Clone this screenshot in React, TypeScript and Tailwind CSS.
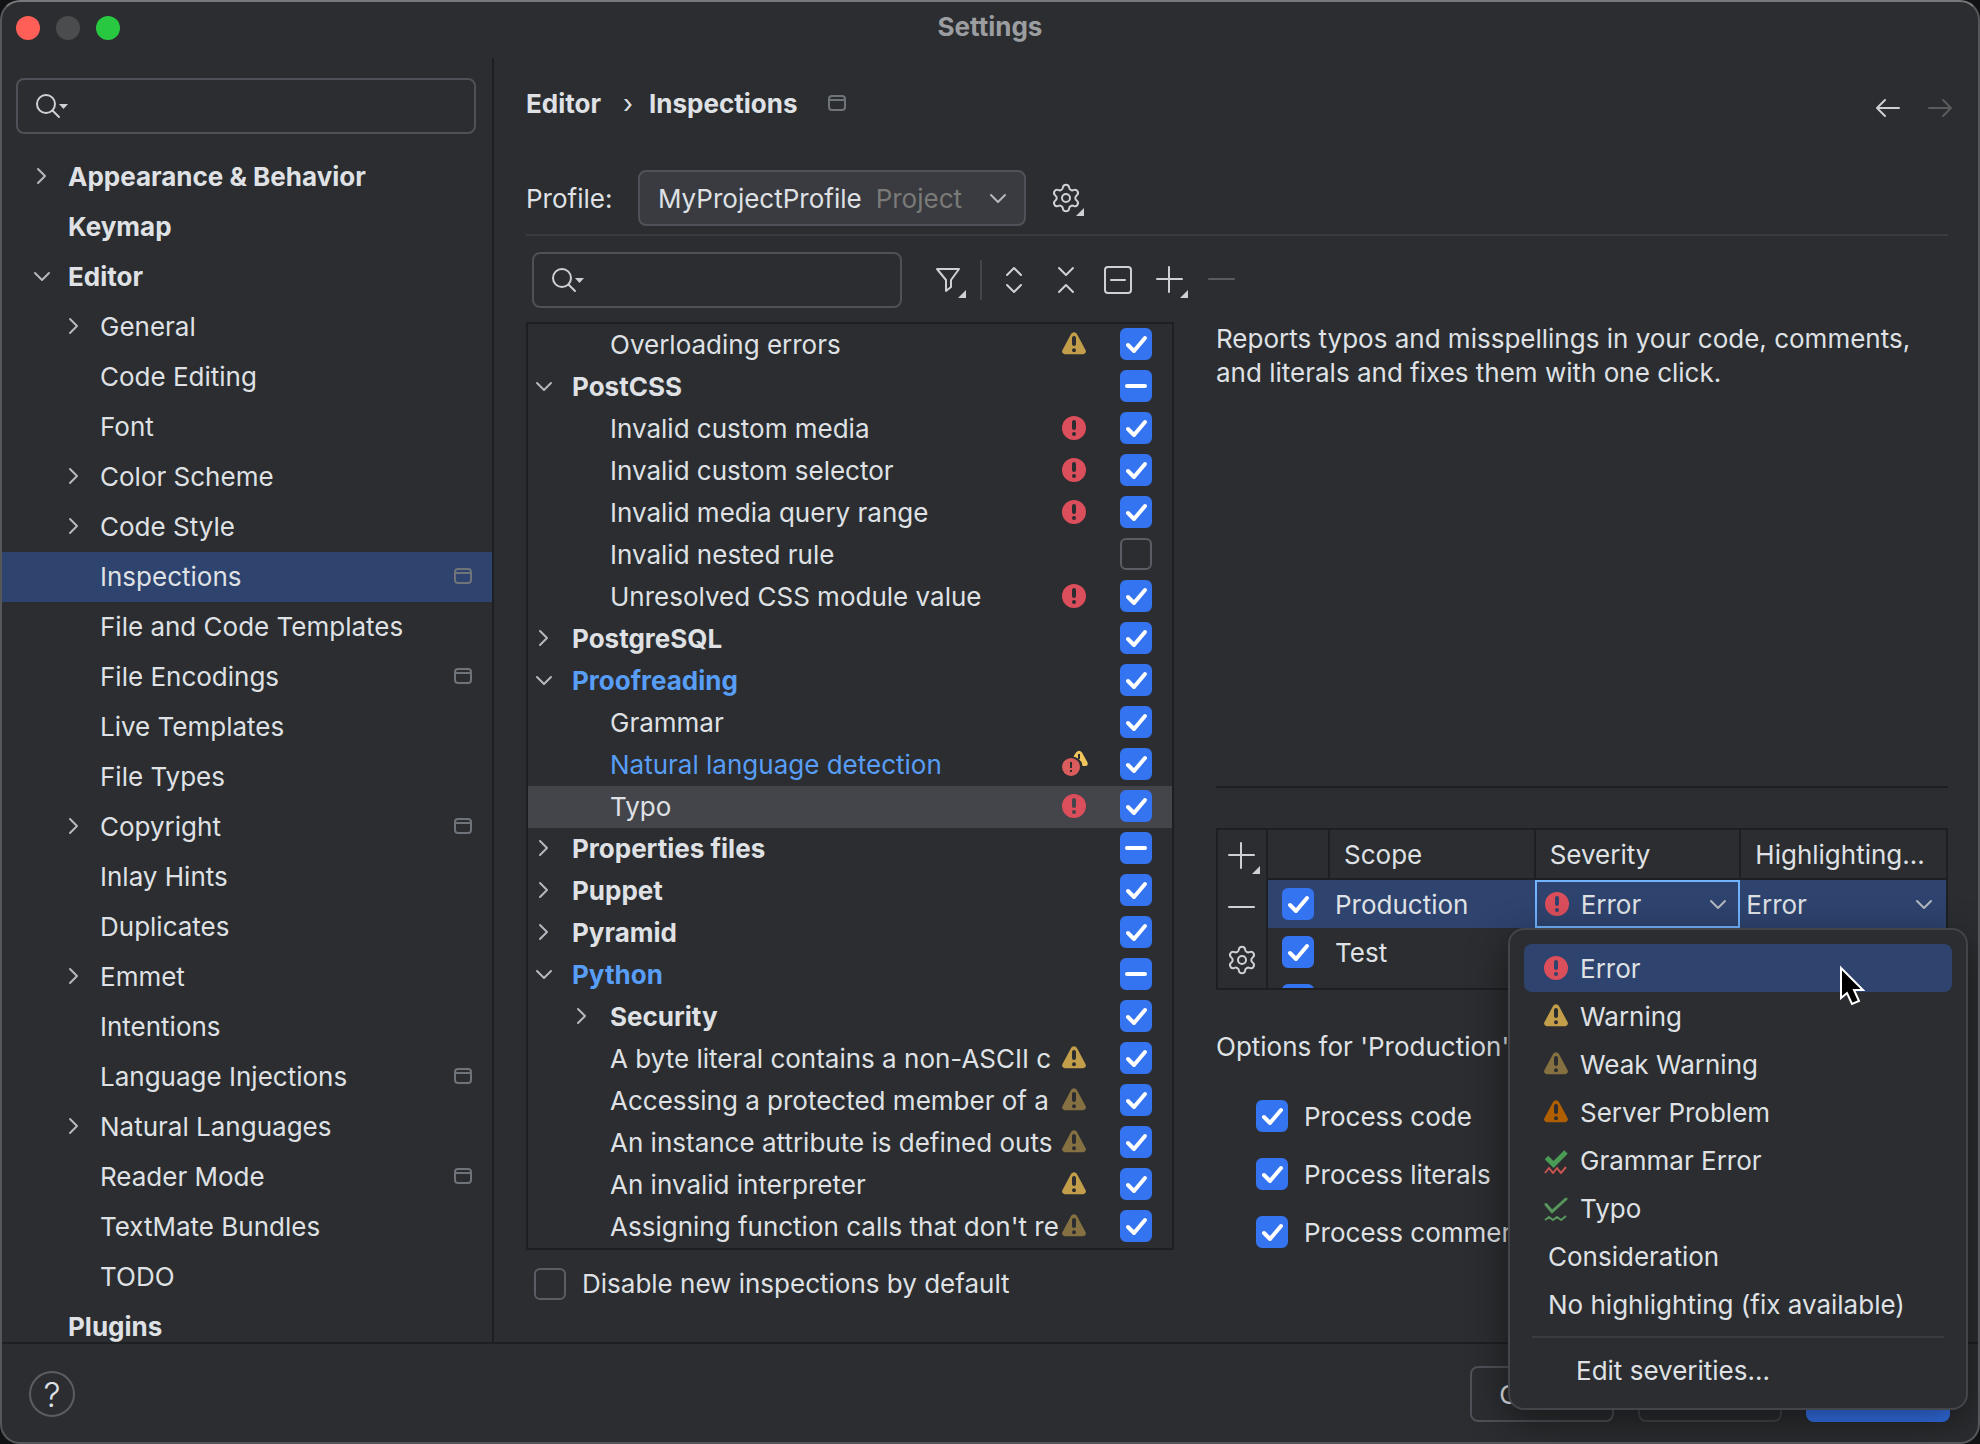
import { useState } from "react";
import type { ReactNode } from "react";
import { Settings } from "lucide-react";

type NavItem = { name: string; top?: boolean; arrow?: "right" | "down"; project?: boolean };

const navItems: NavItem[] = [
  { name: "Appearance & Behavior", top: true, arrow: "right" },
  { name: "Keymap", top: true },
  { name: "Editor", top: true, arrow: "down" },
  { name: "General", arrow: "right" },
  { name: "Code Editing" },
  { name: "Font" },
  { name: "Color Scheme", arrow: "right" },
  { name: "Code Style", arrow: "right" },
  { name: "Inspections", project: true },
  { name: "File and Code Templates" },
  { name: "File Encodings", project: true },
  { name: "Live Templates" },
  { name: "File Types" },
  { name: "Copyright", arrow: "right", project: true },
  { name: "Inlay Hints" },
  { name: "Duplicates" },
  { name: "Emmet", arrow: "right" },
  { name: "Intentions" },
  { name: "Language Injections", project: true },
  { name: "Natural Languages", arrow: "right" },
  { name: "Reader Mode", project: true },
  { name: "TextMate Bundles" },
  { name: "TODO" },
  { name: "Plugins", top: true },
];

type Level = "error" | "warning" | "weak" | "server" | "mixed" | "grammar" | "typo";
type State = "on" | "off" | "mixed";
type Inspection = {
  name: string;
  group?: boolean;
  nested?: boolean;
  arrow?: "right" | "down";
  changed?: boolean;
  level?: Level;
  state: State;
};

const inspections: Inspection[] = [
  { name: "Overloading errors", level: "warning", state: "on" },
  { name: "PostCSS", group: true, arrow: "down", state: "mixed" },
  { name: "Invalid custom media", level: "error", state: "on" },
  { name: "Invalid custom selector", level: "error", state: "on" },
  { name: "Invalid media query range", level: "error", state: "on" },
  { name: "Invalid nested rule", state: "off" },
  { name: "Unresolved CSS module value", level: "error", state: "on" },
  { name: "PostgreSQL", group: true, arrow: "right", state: "on" },
  { name: "Proofreading", group: true, arrow: "down", changed: true, state: "on" },
  { name: "Grammar", state: "on" },
  { name: "Natural language detection", changed: true, level: "mixed", state: "on" },
  { name: "Typo", level: "error", state: "on" },
  { name: "Properties files", group: true, arrow: "right", state: "mixed" },
  { name: "Puppet", group: true, arrow: "right", state: "on" },
  { name: "Pyramid", group: true, arrow: "right", state: "on" },
  { name: "Python", group: true, arrow: "down", changed: true, state: "mixed" },
  { name: "Security", group: true, nested: true, arrow: "right", state: "on" },
  { name: "A byte literal contains a non-ASCII c", level: "warning", state: "on" },
  { name: "Accessing a protected member of a", level: "weak", state: "on" },
  { name: "An instance attribute is defined outs", level: "weak", state: "on" },
  { name: "An invalid interpreter", level: "warning", state: "on" },
  { name: "Assigning function calls that don't re", level: "weak", state: "on" },
];

const severities: { name: string; level?: Level }[] = [
  { name: "Error", level: "error" },
  { name: "Warning", level: "warning" },
  { name: "Weak Warning", level: "weak" },
  { name: "Server Problem", level: "server" },
  { name: "Grammar Error", level: "grammar" },
  { name: "Typo", level: "typo" },
  { name: "Consideration" },
  { name: "No highlighting (fix available)" },
];

function Chevron({ dir }: { dir: "right" | "down" }) {
  return (
    <svg width="20" height="20" viewBox="0 0 20 20" fill="none" stroke="#b4b8bf" strokeWidth="2" strokeLinecap="round" strokeLinejoin="round">
      <path d={dir === "right" ? "M6 3l7 7-7 7" : "M3 7l7 7 7-7"} />
    </svg>
  );
}

function ProjectIcon() {
  return (
    <svg width="18" height="16" viewBox="0 0 18 16" fill="none" stroke="#6f737a" strokeWidth="2">
      <rect x="1" y="1" width="16" height="14" rx="3" />
      <path d="M1 5h16" />
    </svg>
  );
}

function SearchIcon() {
  return (
    <svg width="34" height="26" viewBox="0 0 34 26" fill="none">
      <circle cx="12" cy="11" r="9" stroke="#ced0d6" strokeWidth="2" />
      <path d="M18.500 17.500L25 24" stroke="#ced0d6" strokeWidth="2" strokeLinecap="round" />
      <path d="M25 11h9l-4.500 5z" fill="#ced0d6" />
    </svg>
  );
}

function SearchBox({ label }: { label: string }) {
  return (
    <div className="flex h-14 items-center rounded-lg border-2 border-[#4e5157] pl-4">
      <SearchIcon />
      <input type="text" aria-label={label} className="min-w-0 flex-1 bg-transparent px-2 outline-none" />
    </div>
  );
}

const exclamation = "M12 4a2 2 0 0 1 2 2v6a2 2 0 0 1-4 0V6a2 2 0 0 1 2-2zM12 16a2 2 0 1 1 0 4 2 2 0 0 1 0-4z";

function Triangle({ color }: { color: string }) {
  return (
    <svg width="24" height="24" viewBox="0 0 24 24">
      <path
        fill={color}
        fillRule="evenodd"
        d="M9.200 1.800a3.200 3.200 0 0 1 5.600 0l8.700 16.200a2.800 2.800 0 0 1-2.500 4.200H3a2.800 2.800 0 0 1-2.500-4.200zM12 4a2 2 0 0 1 2 2v6a2 2 0 0 1-4 0V6a2 2 0 0 1 2-2zM12 16.200a2 2 0 1 1 0 4 2 2 0 0 1 0-4z"
      />
    </svg>
  );
}

function LevelIcon({ level }: { level: Level }) {
  if (level === "warning") return <Triangle color="#c29e4a" />;
  if (level === "weak") return <Triangle color="#857042" />;
  if (level === "server") return <Triangle color="#b05f00" />;
  if (level === "error") {
    return (
      <svg width="24" height="24" viewBox="0 0 24 24">
        <path fill="#db4e5b" fillRule="evenodd" d={"M12 0a12 12 0 1 1 0 24 12 12 0 0 1 0-24z" + exclamation} />
      </svg>
    );
  }
  if (level === "mixed") {
    return (
      <svg width="28" height="28" viewBox="0 0 28 28" className="shrink-0">
        <path d="M11.500 6.500l2.500-4Q17 -1 20 2.500l5.500 10Q26.500 16 23.500 16H20.500Q20 9 11.500 6.500z" fill="#f2c55c" />
        <path d="M17 4v5" stroke="#2b2d30" strokeWidth="2" />
        <circle cx="9" cy="17" r="9" fill="#db5c5c" />
        <path d="M9 12v6M9 20v2" stroke="#2b2d30" strokeWidth="2" />
      </svg>
    );
  }
  if (level === "grammar") {
    return (
      <svg width="24" height="28" viewBox="0 0 24 28" fill="none">
        <path d="M2.500 11.500l7 7L22 6" stroke="#499c54" strokeWidth="5" />
        <path d="M1 27l4-5 4 5 4-5 4 5 5-6" stroke="#c75450" strokeWidth="2" />
      </svg>
    );
  }
  return (
    <svg width="24" height="28" viewBox="0 0 24 28" fill="none">
      <path d="M2 10.500l6 7L22 5" stroke="#57965c" strokeWidth="3" strokeLinecap="round" />
      <path d="M1 26l4-3 4 3 4-3 4 3 5-4" stroke="#57965c" strokeWidth="2" />
    </svg>
  );
}

function Checkbox({ id, state, label }: { id: string; state: State; label?: string }) {
  return (
    <span className="relative block size-8 shrink-0">
      <input
        id={id}
        type="checkbox"
        aria-label={label}
        defaultChecked={state !== "off"}
        className="peer block size-8 appearance-none rounded-md border-2 border-[#5a5d63] checked:border-[#3574f0] checked:bg-[#3574f0]"
      />
      <svg
        viewBox="0 0 32 32"
        fill="none"
        stroke="white"
        strokeWidth="4"
        strokeLinecap="round"
        strokeLinejoin="round"
        className="pointer-events-none absolute inset-0 hidden peer-checked:block"
      >
        <path d={state === "mixed" ? "M7 16h18" : "M8 17l6 6L25 10"} />
      </svg>
    </span>
  );
}

// small triangle in the corner of a button that opens a popup
function Corner() {
  return (
    <svg width="8" height="8" viewBox="0 0 8 8" className="absolute right-2 bottom-0.5">
      <path d="M8 0v8H0z" fill="#ced0d6" />
    </svg>
  );
}

function ToolButton({ label, corner, children }: { label: string; corner?: boolean; children: ReactNode }) {
  return (
    <button type="button" aria-label={label} className="relative flex h-10 w-[52px] shrink-0 items-center justify-center">
      {children}
      {corner && <Corner />}
    </button>
  );
}

function Glyph({ d, color = "#ced0d6" }: { d: string; color?: string }) {
  return (
    <svg width="32" height="32" viewBox="0 0 32 32" fill="none" stroke={color} strokeWidth="2" strokeLinecap="round" strokeLinejoin="round">
      <path d={d} />
    </svg>
  );
}

function Sidebar() {
  return (
    <aside className="flex w-[492px] shrink-0 flex-col border-r-2 border-[#1e1f22]">
      <div className="pt-5 pr-4 pl-3.5">
        <SearchBox label="Search settings" />
      </div>
      <nav className="mt-[18px] min-h-0 flex-1 overflow-hidden">
        {navItems.map((item) => (
          <a
            key={item.name}
            href="#"
            className={`flex h-[50px] items-center pr-5 pb-0.5 ${item.top ? "pl-[30px] font-bold" : "pl-[62px]"} ${
              item.name === "Inspections" ? "bg-[#2e436e]" : ""
            }`}
          >
            <span className="w-9 shrink-0">{item.arrow && <Chevron dir={item.arrow} />}</span>
            <span className="flex-1 whitespace-nowrap">{item.name}</span>
            {item.project && <ProjectIcon />}
          </a>
        ))}
      </nav>
    </aside>
  );
}

function Header() {
  return (
    <>
      <div className="flex h-[90px] items-center font-bold">
        <span>Editor</span>
        <span className="w-12 pl-1.5 text-center font-normal">›</span>
        <h1>Inspections</h1>
        <span className="ml-[30px]">
          <ProjectIcon />
        </span>
        <div className="mt-2.5 -mr-[18px] ml-auto flex">
          <ToolButton label="Back">
            <Glyph d="M27 16H5m8-8l-8 8 8 8" />
          </ToolButton>
          <ToolButton label="Forward">
            <Glyph d="M5 16h22m-8-8l8 8-8 8" color="#5a5b5d" />
          </ToolButton>
        </div>
      </div>
      <div className="flex items-center border-b-2 border-[#393b40] pt-[22px] pb-2">
        <label htmlFor="profile" className="w-28">
          Profile:
        </label>
        <div className="relative h-14 w-[388px]">
          <select id="profile" className="size-full appearance-none rounded-lg border-2 border-[#4e5157] bg-[#393b40] pl-[18px] outline-none">
            <option>MyProjectProfile</option>
          </select>
          <div className="pointer-events-none absolute inset-y-0 right-[18px] flex items-center gap-[26px]">
            <span className="text-[#7a7a78]">Project</span>
            <Chevron dir="down" />
          </div>
        </div>
        <div className="ml-3.5">
          <ToolButton label="Profile actions" corner>
            <Settings size={32} strokeWidth={1.5} color="#ced0d6" />
          </ToolButton>
        </div>
      </div>
    </>
  );
}

function Toolbar() {
  return (
    <div className="flex items-center pt-4 pb-3.5 pl-1.5">
      <div className="w-[370px] shrink-0">
        <SearchBox label="Search inspections" />
      </div>
      <div className="ml-5">
        <ToolButton label="Filter" corner>
          <Glyph d="M5 5h22l-8 11v7l-5 4V16z" />
        </ToolButton>
      </div>
      <span className="mx-1.5 h-10 w-0.5 bg-[#43454a]" />
      <ToolButton label="Expand all">
        <Glyph d="M9 11l7-7 7 7M9 21l7 7 7-7" />
      </ToolButton>
      <ToolButton label="Collapse all">
        <Glyph d="M9 4l7 7 7-7M9 28l7-7 7 7" />
      </ToolButton>
      <ToolButton label="Reset to empty">
        <Glyph d="M6 3h20a3 3 0 0 1 3 3v20a3 3 0 0 1-3 3H6a3 3 0 0 1-3-3V6a3 3 0 0 1 3-3zM9 16h14" />
      </ToolButton>
      <ToolButton label="Add inspection" corner>
        <Glyph d="M3 15h25M15 3v25" />
      </ToolButton>
      <ToolButton label="Remove inspection">
        <Glyph d="M3 15h25" color="#5a5b5d" />
      </ToolButton>
    </div>
  );
}

function InspectionTree() {
  return (
    <div className="w-[648px] shrink-0">
      <ul className="border-2 border-[#1e1f22]">
        {inspections.map((row, i) => (
          <li
            key={row.name}
            className={`flex h-[42px] items-center pr-5 pb-0.5 ${row.group && !row.nested ? "pl-1.5" : "pl-11"} ${
              row.group ? "font-bold" : ""
            } ${row.changed ? "text-[#589df6]" : ""} ${row.name === "Typo" ? "bg-[#43454a]" : ""}`}
          >
            <span className="w-[38px] shrink-0">{row.arrow && <Chevron dir={row.arrow} />}</span>
            <label htmlFor={`inspection-${i}`} className="min-w-0 flex-1 whitespace-nowrap">
              {row.name}
            </label>
            <span className="ml-1 flex w-6 shrink-0">{row.level && <LevelIcon level={row.level} />}</span>
            <span className="ml-[34px]">
              <Checkbox id={`inspection-${i}`} state={row.state} />
            </span>
          </li>
        ))}
      </ul>
      <div className="flex items-center gap-4 pt-3.5 pl-2">
        <Checkbox id="disable-new" state="off" />
        <label htmlFor="disable-new">Disable new inspections by default</label>
      </div>
    </div>
  );
}

function SeverityPopup() {
  const [picked, setPicked] = useState("Error");
  return (
    <div className="absolute top-[100px] -right-5 z-10 w-[460px] rounded-2xl border-2 border-[#43454a] bg-[#2b2d30] p-3.5 shadow-[0_12px_40px_rgba(0,0,0,0.45)]">
      {severities.map((s) => (
        <button
          key={s.name}
          type="button"
          onClick={() => setPicked(s.name)}
          className={`flex h-12 w-full items-center rounded-lg whitespace-nowrap ${s.level ? "gap-3 pl-5" : "pl-6"} ${
            s.name === picked ? "bg-[#2e436e]" : ""
          }`}
        >
          {s.level && <LevelIcon level={s.level} />}
          {s.name}
        </button>
      ))}
      <hr className="mx-2 my-2 border-t-2 border-[#393b40]" />
      <button type="button" className="flex h-12 w-full items-center pl-[52px]">
        Edit severities...
      </button>
      <svg width="30" height="42" viewBox="-2 -3 30 42" className="pointer-events-none absolute top-[34px] right-[98px]">
        <path d="M1 1v30l6-5 5 11 7-3-5-11h9z" fill="black" stroke="white" strokeWidth="2" />
      </svg>
    </div>
  );
}

function CellSelect({ label }: { label: string }) {
  return (
    <>
      <select aria-label={label} className="min-w-0 flex-1 appearance-none bg-transparent outline-none">
        <option>Error</option>
      </select>
      <span className="pointer-events-none">
        <Chevron dir="down" />
      </span>
    </>
  );
}

function ScopeTable() {
  return (
    <div className="relative">
      <div className="flex h-[162px] overflow-hidden border-2 border-[#1e1f22]">
        <div className="flex w-[50px] shrink-0 flex-col items-center gap-3 border-r-2 border-[#1e1f22] pt-1.5">
          <ToolButton label="Add scope" corner>
            <Glyph d="M3 15h25M15 3v25" />
          </ToolButton>
          <ToolButton label="Remove scope">
            <Glyph d="M3 15h25" />
          </ToolButton>
          <ToolButton label="Edit scopes">
            <Settings size={32} strokeWidth={1.5} color="#ced0d6" />
          </ToolButton>
        </div>
        <table className="h-fit w-full table-fixed border-collapse text-left">
          <thead>
            <tr className="h-[49px]">
              <th className="w-[61px] p-0" aria-label="Enabled" />
              <th className="border-l-2 border-[#1e1f22] p-0 pl-3.5 font-normal">Scope</th>
              <th className="border-l-2 border-[#1e1f22] p-0 pl-3.5 font-normal">Severity</th>
              <th className="border-l-2 border-[#1e1f22] p-0 pl-3.5 font-normal">Highlighting...</th>
            </tr>
          </thead>
          <tbody>
            <tr className="h-12 border-t-2 border-[#1e1f22] bg-[#2e436e]">
              <td className="p-0 pl-3.5">
                <Checkbox id="scope-production" state="on" />
              </td>
              <td className="p-0 pl-1.5">
                <label htmlFor="scope-production">Production</label>
              </td>
              <td className="p-0">
                <div className="flex h-12 items-center border-2 border-[#70b3ff] pr-2.5 pl-2">
                  <LevelIcon level="error" />
                  <span className="w-3" />
                  <CellSelect label="Severity" />
                </div>
              </td>
              <td className="p-0">
                <div className="flex h-12 items-center pr-3 pl-1.5">
                  <CellSelect label="Highlighting" />
                </div>
              </td>
            </tr>
            <tr className="h-12">
              <td className="p-0 pl-3.5">
                <Checkbox id="scope-test" state="on" />
              </td>
              <td className="p-0 pl-1.5" colSpan={3}>
                <label htmlFor="scope-test">Test</label>
              </td>
            </tr>
            <tr className="h-12">
              <td className="p-0 pl-3.5" colSpan={4}>
                <Checkbox id="scope-other" state="on" label="Other scope" />
              </td>
            </tr>
          </tbody>
        </table>
      </div>
      <SeverityPopup />
    </div>
  );
}

function Details() {
  return (
    <section className="flex min-w-0 flex-1 flex-col">
      <p className="h-[464px] leading-[34px]">
        Reports typos and misspellings in your code, comments, and literals and fixes them with one click.
      </p>
      <hr className="mb-10 border-t-2 border-[#1e1f22]" />
      <ScopeTable />
      <h2 className="mt-10 whitespace-nowrap leading-[34px]">Options for 'Production'</h2>
      <div className="mt-9 flex flex-col gap-[26px] pl-10">
        {["Process code", "Process literals", "Process comments"].map((name) => (
          <div key={name} className="flex h-8 items-center gap-4">
            <Checkbox id={name} state="on" />
            <label htmlFor={name}>{name}</label>
          </div>
        ))}
      </div>
    </section>
  );
}

function Footer() {
  return (
    <footer className="flex h-[100px] shrink-0 items-center border-t-2 border-[#1e1f22] pt-0.5 pr-7 pl-[27px]">
      <button
        type="button"
        aria-label="Help"
        className="flex size-[46px] items-center justify-center rounded-full border-2 border-[#5a5d63] text-[34px] font-light"
      >
        ?
      </button>
      <div className="ml-auto flex gap-6">
        <button type="button" className="h-14 w-36 rounded-lg border-2 border-[#4e5157]">
          Cancel
        </button>
        <button type="button" className="h-14 w-36 rounded-lg border-2 border-[#43454a] text-[#6f737a]">
          Apply
        </button>
        <button type="button" className="h-14 w-36 rounded-lg bg-[#3574f0] text-white">
          OK
        </button>
      </div>
    </footer>
  );
}

export default function App() {
  return (
    <div className="h-screen overflow-hidden bg-[#111214]">
      <div className="flex h-full flex-col overflow-hidden rounded-[20px] border-2 border-[#55575b] border-t-[#77787a] bg-[#2b2d30] font-['Inter',sans-serif] text-[26px] text-[#dfe1e5]">
        <div className="relative flex h-14 shrink-0 items-center justify-center">
          <div className="absolute top-3.5 left-3.5 flex gap-4">
            <span className="size-6 rounded-full bg-[#ff5f57]" />
            <span className="size-6 rounded-full bg-[#4b4c4e]" />
            <span className="size-6 rounded-full bg-[#28c840]" />
          </div>
          <span className="pb-2 font-bold text-[#9b9da0]">Settings</span>
        </div>
        <div className="flex min-h-0 flex-1">
          <Sidebar />
          <main className="flex min-w-0 flex-1 flex-col pr-[30px] pl-8">
            <Header />
            <Toolbar />
            <div className="flex gap-[42px]">
              <InspectionTree />
              <Details />
            </div>
          </main>
        </div>
        <Footer />
      </div>
    </div>
  );
}
